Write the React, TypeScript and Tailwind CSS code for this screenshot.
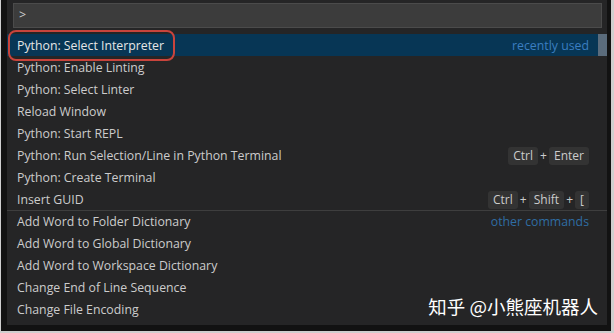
import React from "react";

type Row = {
  label: string;
  right?: React.ReactNode;
  selected?: boolean;
  separator?: boolean;
};

function Key({ k }: { k: string }) {
  return (
    <span className="inline-flex h-[18px] items-center rounded-[3px] bg-[#333333] px-[5px] text-[12px] leading-none text-[#cccccc]">
      {k}
    </span>
  );
}

function Keys({ keys }: { keys: string[] }) {
  return (
    <span className="flex items-center">
      {keys.map((k, i) => (
        <React.Fragment key={i}>
          {i > 0 && (
            <span className="w-[11px] text-center text-[12px] leading-none text-[#cccccc]">+</span>
          )}
          <Key k={k} />
        </React.Fragment>
      ))}
    </span>
  );
}

const rows: Row[] = [
  {
    label: "Python: Select Interpreter",
    selected: true,
    right: <span className="text-[#3b7ec0]">recently used</span>,
  },
  { label: "Python: Enable Linting" },
  { label: "Python: Select Linter" },
  { label: "Reload Window" },
  { label: "Python: Start REPL" },
  {
    label: "Python: Run Selection/Line in Python Terminal",
    right: <Keys keys={["Ctrl", "Enter"]} />,
  },
  { label: "Python: Create Terminal" },
  { label: "Insert GUID", right: <Keys keys={["Ctrl", "Shift", "["]} /> },
  {
    label: "Add Word to Folder Dictionary",
    separator: true,
    right: <span className="text-[#2f6da3]">other commands</span>,
  },
  { label: "Add Word to Global Dictionary" },
  { label: "Add Word to Workspace Dictionary" },
  { label: "Change End of Line Sequence" },
  { label: "Change File Encoding" },
];

export default function App() {
  return (
    <div
      className="h-[333px] w-[614px] bg-[#cfcfcf] pb-[2px] pl-[1px] pr-[3px]"
      style={{ fontFamily: '"Open Sans", "Noto Sans", sans-serif' }}
    >
      <div className="h-full bg-[#121212] pb-[6px] pl-[6px] pr-[4px]">
        <div className="relative flex h-full flex-col overflow-hidden bg-[#252526]">
          <div className="mx-[6px] mr-[5px] mt-[3px] flex h-[25px] items-center border border-[#4b4b4b] bg-[#3c3c3c] pl-[5px] text-[12.5px] text-[#cccccc]">
            &gt;
          </div>
          <div className="relative mt-[6px] flex flex-col">
            <div className="absolute right-0 top-0 z-10 h-[22px] w-[9px] bg-[#5b6c7c]" />
            {rows.map((r, i) => (
              <div
                key={i}
                className={
                  "relative flex h-[22px] items-center justify-between pl-[10px] pr-[18px] pt-[2px] text-[12.3px] " +
                  (r.selected ? "bg-[#073655] text-[#e6e6e6] " : "text-[#cccccc] ") +
                  (r.separator ? "border-t border-[#3e3e3e]" : "")
                }
              >
                <span className="whitespace-nowrap">{r.label}</span>
                {r.right}
                {r.selected && (
                  <div className="absolute left-[1px] top-[-4px] h-[31px] w-[167px] rounded-[8px] border-2 border-[#c9443c]" />
                )}
              </div>
            ))}
          </div>
          <div
            className="absolute bottom-[10px] right-[9px] text-[18.5px] leading-none text-white"
            style={{ fontFamily: '"Noto Sans CJK SC", sans-serif' }}
          >
            知乎 @小熊座机器人
          </div>
        </div>
      </div>
    </div>
  );
}
